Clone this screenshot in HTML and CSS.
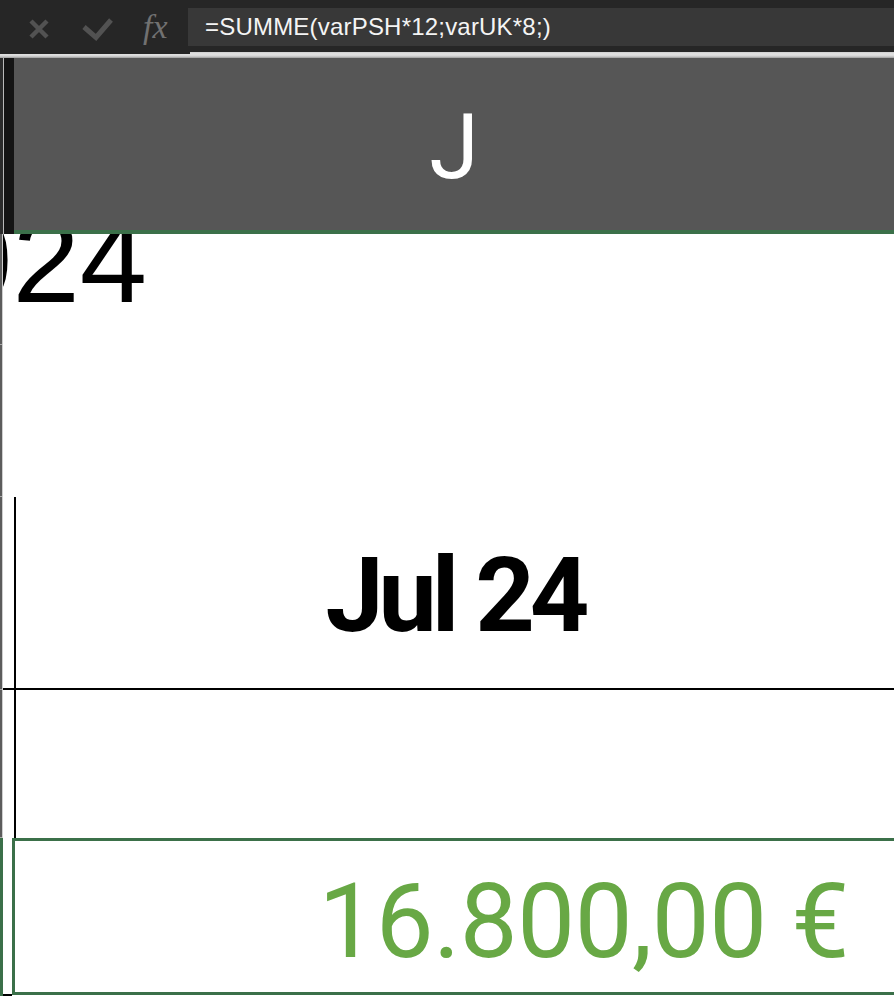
FILE: index.html
```html
<!DOCTYPE html>
<html>
<head>
<meta charset="utf-8">
<link rel="stylesheet" href="styles.css">
</head>
<body>
<div class="app">
  <div class="topbar">
    <div class="tools">
      <svg class="tool-icons" width="130" height="52" viewBox="0 0 130 52">
        <path d="M31 21 L47 37 M47 21 L31 37" stroke="#525252" stroke-width="4.5" fill="none"/>
        <path d="M84 27 L96 37.5 L111 20" stroke="#525252" stroke-width="5" fill="none"/>
      </svg>
      <span class="fx">fx</span>
    </div>
    <div class="formula">=SUMME(varPSH*12;varUK*8;)</div>
  </div>
  <div class="sep"><div class="sep-gap"></div></div>
  <div class="colhdr">
    <div class="rh-strip"></div>
    <div class="rh-line"></div>
    <div class="ci-hdr"></div>
    <div class="cj-hdr">J</div>
  </div>
  <div class="row r1">
    <div class="rh"></div>
    <div class="r1-cells"><div class="year-box"><span class="year">2024</span></div></div>
  </div>
  <div class="row r2">
    <div class="rh"></div>
    <div class="ci"></div>
    <div class="cj"></div>
  </div>
  <div class="row r3">
    <div class="rh"></div>
    <div class="ci ci-bottom"></div>
    <div class="cj cj-date"><span class="date">Jul 24</span></div>
  </div>
  <div class="row r4">
    <div class="rh"></div>
    <div class="ci"></div>
    <div class="cj cj-left"></div>
  </div>
  <div class="row r5">
    <div class="rh rh-sel"></div>
    <div class="ci ci-sel"></div>
    <div class="cj cj-sel"><span class="amount">16.800,00 €</span></div>
  </div>
</div>
</body>
</html>
```
FILE: styles.css
```css
html, body {
  margin: 0;
  padding: 0;
  background: #ffffff;
}
.app {
  width: 894px;
  height: 996px;
  overflow: hidden;
  display: flex;
  flex-direction: column;
  background: #ffffff;
}
.topbar {
  height: 52px;
  flex: none;
  display: flex;
  background: #262626;
}
.tools {
  width: 188px;
  flex: none;
  display: flex;
  align-items: flex-start;
}
.tool-icons {
  display: block;
  flex: none;
}
.fx {
  margin-left: 13px;
  margin-top: 9px;
  font-family: "Liberation Serif", "DejaVu Serif", serif;
  font-style: italic;
  font-size: 34px;
  line-height: 36px;
  color: #717171;
}
.formula {
  flex: 1;
  margin-top: 8px;
  height: 38px;
  background: #383838;
  display: flex;
  align-items: center;
  padding-left: 17px;
  font-family: "Liberation Sans", Arial, sans-serif;
  font-size: 24px;
  letter-spacing: 0.2px;
  color: #f4f4f4;
  white-space: nowrap;
}
.sep {
  height: 6px;
  flex: none;
  background: linear-gradient(to bottom, #cfcfcf 0, #e3e3e3 2px, #d6d6d6 4px, #9c9c9c 6px);
}
.sep-gap {
  width: 190px;
  height: 2px;
  background: #262626;
}
.colhdr {
  height: 176px;
  flex: none;
  display: flex;
}
.rh-strip {
  width: 3px;
  background: #2b2b2b;
}
.rh-line {
  width: 1px;
  background: #b9b9b9;
}
.ci-hdr {
  width: 10px;
  background: #141414;
}
.cj-hdr {
  flex: 1;
  background: #565656;
  border-bottom: 4px solid #3b7049;
  display: flex;
  justify-content: center;
  align-items: flex-start;
  padding-top: 45px;
  font-family: Roboto, "Liberation Sans", sans-serif;
  font-size: 90px;
  line-height: 1;
  color: #ffffff;
}
.row {
  display: flex;
  flex: none;
}
.rh {
  width: 2px;
  background: #5c5c5c;
  border-right: 1px solid #cfcfcf;
  flex: none;
  box-shadow: inset 0 -1px 0 #a8a8a8;
}
.rh-sel {
  background: #3b7049;
  border-right: 1px solid #3b7049;
  box-shadow: none;
}
.ci {
  width: 11px;
  flex: none;
}
.cj {
  flex: 1;
}
.r1 { height: 111px; }
.r2 { height: 152px; }
.r3 { height: 193px; }
.r4 { height: 148px; }
.r5 { height: 158px; }
.r1-cells {
  flex: 1;
  overflow: hidden;
}
.year-box {
  width: 144px;
  display: flex;
  justify-content: flex-end;
  margin-top: -34px;
}
.year {
  font-family: "Liberation Sans", Arial, sans-serif;
  font-size: 121px;
  line-height: 121px;
  color: #000000;
  white-space: nowrap;
}
.ci-bottom {
  border-bottom: 2px solid #000000;
}
.cj-date {
  border-left: 2px solid #000000;
  border-bottom: 2px solid #000000;
  display: flex;
  justify-content: center;
  align-items: flex-start;
  padding-top: 47px;
  padding-left: 0;
}
.date {
  font-family: Roboto, "Liberation Sans", sans-serif;
  font-weight: 700;
  font-size: 104px;
  line-height: 1;
  letter-spacing: -5px;
  color: #000000;
  white-space: nowrap;
}
.cj-left {
  border-left: 2px solid #000000;
}
.ci-sel {
  width: 9px;
  height: 156px;
  border-bottom: 2px solid #000000;
}
.cj-sel {
  height: 157px;
  box-sizing: border-box;
  border: 3px solid #3b7049;
  border-right: none;
  display: flex;
  justify-content: flex-end;
  align-items: flex-start;
  padding-top: 29px;
  padding-right: 45px;
}
.amount {
  font-family: Roboto, "Liberation Sans", sans-serif;
  font-size: 103px;
  line-height: 1;
  letter-spacing: -0.5px;
  color: #68a845;
  white-space: nowrap;
}
```
